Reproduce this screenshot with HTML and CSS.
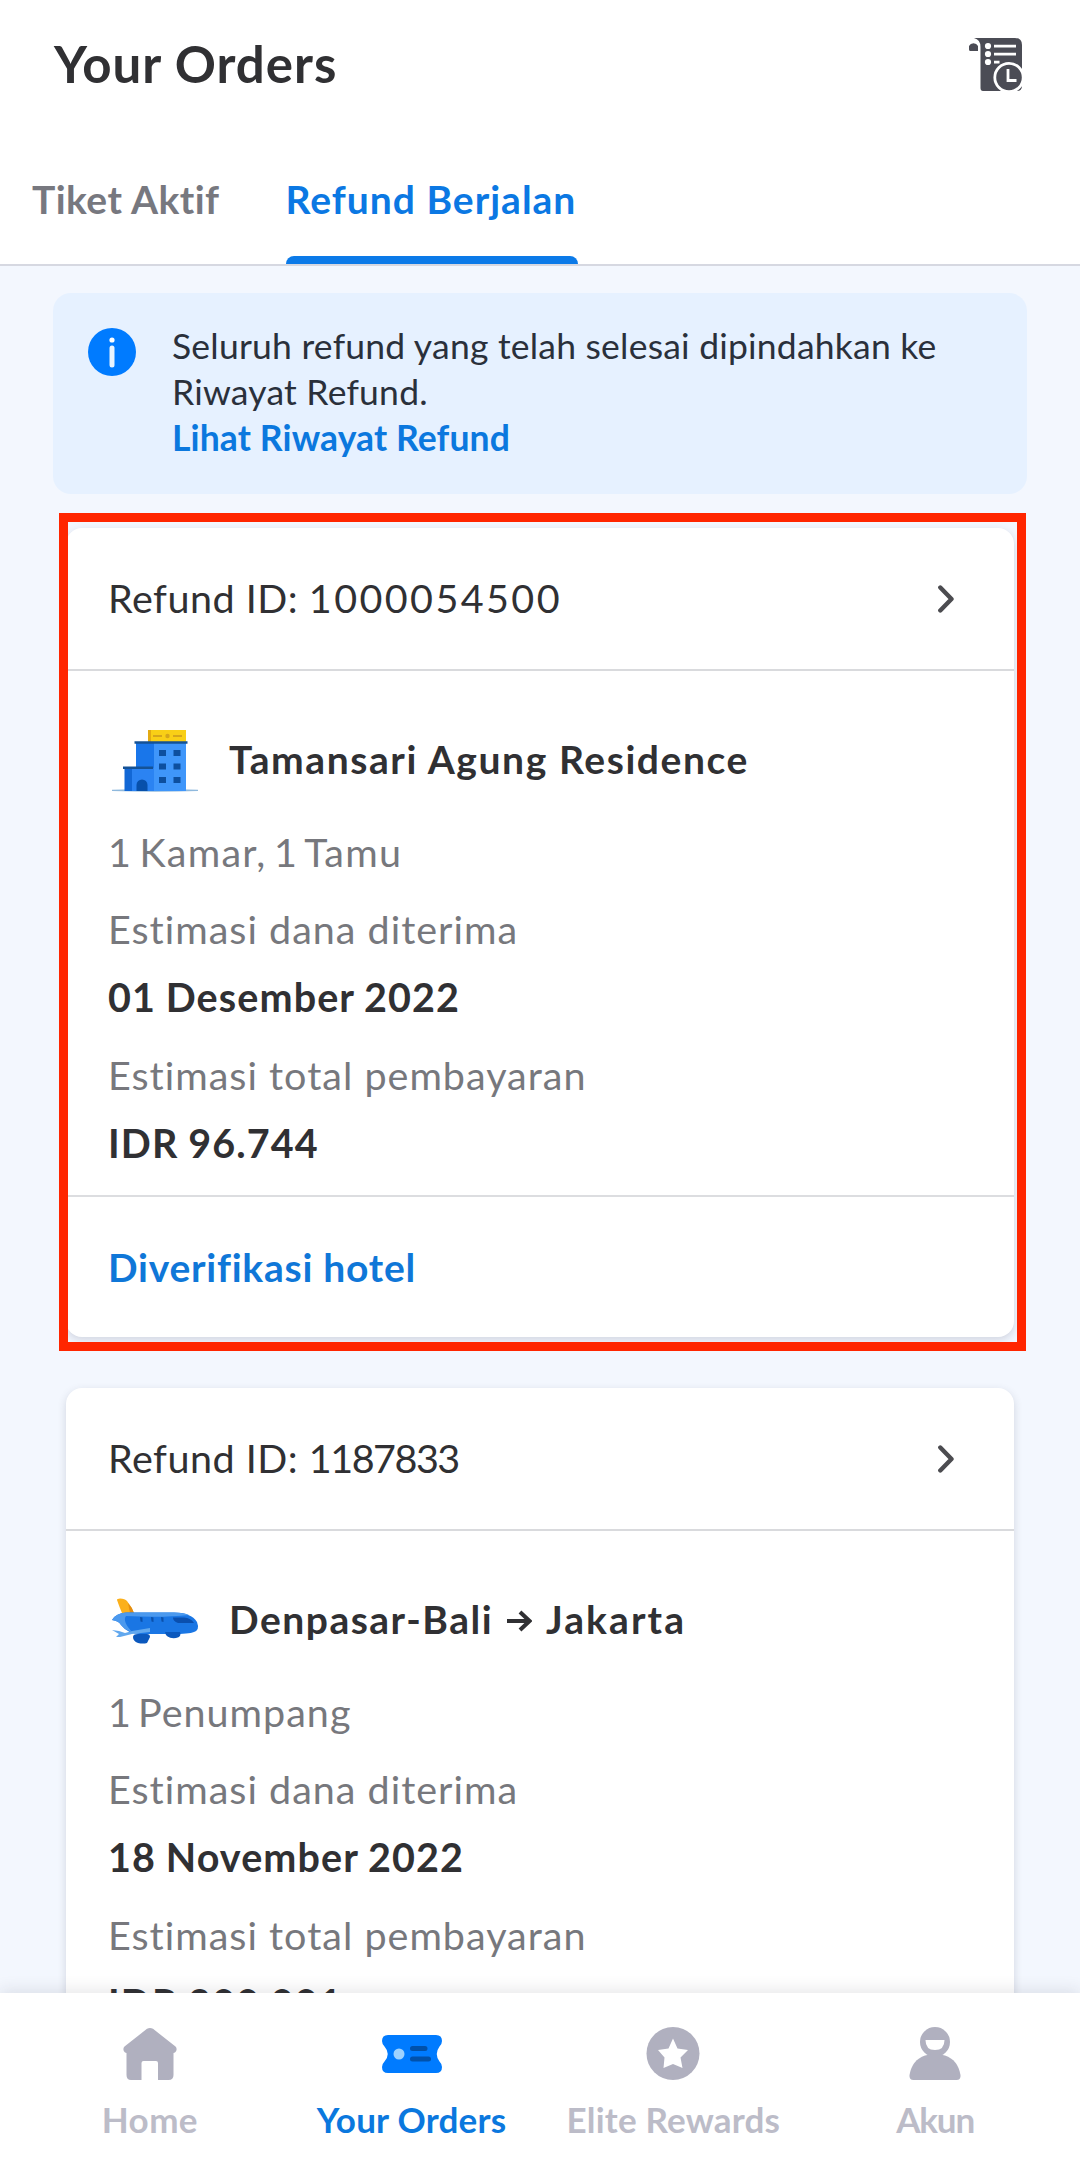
FILE: index.html
```html
<!DOCTYPE html>
<html lang="id">
<head>
<meta charset="utf-8">
<title>Your Orders</title>
<link rel="stylesheet" href="styles.css">
</head>
<body>
<div class="app">
  <header class="top">
    <div class="top-bar">
      <h1 class="top-title">Your Orders</h1>
      <svg class="history-icon" viewBox="0 0 54 54" width="54" height="54">
        <path fill="#4b4c55" d="M0 8a5 5 0 0 1 9 0v5H1.500Q0 13 0 11.500zM5 0H46Q53 0 53 7V48Q53 53 48 53H14Q11.500 53 11.500 50V9Q11.500 1.500 5 0z"/>
        <g fill="#fff">
          <circle cx="19" cy="8" r="3.100"/><circle cx="19" cy="16" r="3.100"/><circle cx="19" cy="24" r="3.100"/>
          <path d="M25 6.700h22v2.800H25zM25 14.700h22v2.800H25zM25 22.700h5.500v2.800H25z"/>
        </g>
        <circle cx="40" cy="39.500" r="14.200" fill="#4b4c55" stroke="#fff" stroke-width="2.800"/>
        <path d="M39 31v11.500h8.500" fill="none" stroke="#fff" stroke-width="2.800"/>
      </svg>
    </div>
    <nav class="tabs">
      <a class="tab tab-active-tickets">Tiket Aktif</a>
      <a class="tab tab-refunds is-selected">Refund Berjalan</a>
    </nav>
  </header>

  <main class="content">
    <section class="notice">
      <svg class="notice-icon" viewBox="0 0 48 48" width="48" height="48">
        <circle cx="24" cy="24" r="24" fill="#007bff"/>
        <circle cx="24" cy="12" r="2.600" fill="#fff"/>
        <path d="M24 20v17" stroke="#e8f4ff" stroke-width="5" stroke-linecap="round"/>
      </svg>
      <div class="notice-text">
        <p>Seluruh refund yang telah selesai dipindahkan ke<br>Riwayat Refund.</p>
        <a class="notice-link">Lihat Riwayat Refund</a>
      </div>
    </section>

    <article class="card is-marked">
      <div class="card-head">
        <span class="refund-id">Refund ID: <span class="digits-wide">1000054500</span></span>
        <svg class="chevron" viewBox="0 0 16 28" width="16" height="28"><path d="M2.300 2.500L13.500 14L2.300 25.500" fill="none" stroke="#4c4c50" stroke-width="4.400" stroke-linecap="round" stroke-linejoin="round"/></svg>
      </div>
      <div class="card-body">
        <div class="product">
          <svg class="product-icon" viewBox="0 0 88 62" width="88" height="62">
            <path d="M0 59.800Q44 58 86 59.800V61Q44 62.500 0 61z" fill="#8fb9dd"/>
            <path d="M36 0H74V12H36z" fill="#f9cf16"/><path d="M36 0h3v12h-3z" fill="#e3aa13"/>
            <path d="M41 6h9M61 6h9" stroke="#d5a51b" stroke-width="1.800"/><circle cx="55.500" cy="6" r="2.200" fill="#d5a51b"/>
            <path d="M24 13H43V61H24z" fill="#1976ea"/><path d="M42 13H74V61H42z" fill="#3f96fa"/>
            <path d="M22.500 11.200H75.500V13.800H22.500z" fill="#145296"/>
            <path d="M12.500 38H21V61H12.500z" fill="#1267d5"/><path d="M20 38H42V61H20z" fill="#2b83f2"/>
            <path d="M11 36.500H41V39H11z" fill="#145296"/>
            <path d="M24.500 61V55a5.500 5.500 0 0 1 11 0v6z" fill="#0750aa"/>
            <path d="M47 20h7v6h-7zM61.500 20h7v6h-7zM47 33.500h7v6h-7zM61.500 33.500h7v6h-7zM47 47h7v6h-7zM61.500 47h7v6h-7z" fill="#0d4f9f"/>
          </svg>
          <h2 class="product-name name-hotel">Tamansari Agung Residence</h2>
        </div>
        <p class="detail detail-rooms">1 Kamar, 1 Tamu</p>
        <dl class="facts">
          <dt>Estimasi dana diterima</dt><dd>01 Desember 2022</dd>
          <dt>Estimasi total pembayaran</dt><dd>IDR 96.744</dd>
        </dl>
      </div>
      <div class="card-foot">Diverifikasi hotel</div>
    </article>

    <article class="card">
      <div class="card-head">
        <span class="refund-id">Refund ID: <span class="digits-tight">1187833</span></span>
        <svg class="chevron" viewBox="0 0 16 28" width="16" height="28"><path d="M2.300 2.500L13.500 14L2.300 25.500" fill="none" stroke="#4c4c50" stroke-width="4.400" stroke-linecap="round" stroke-linejoin="round"/></svg>
      </div>
      <div class="card-body">
        <div class="product">
          <svg class="product-icon" viewBox="0 0 88 46" width="88" height="46">
            <path d="M5 2Q5 .500 8 .500Q13 .500 15 3Q19 8 22 15H10Q7 8 5 2z" fill="#fbb01c"/>
            <path d="M16 5Q20 9 22 15h-4z" fill="#e48d10"/>
            <path d="M0 22Q4 15 14 14.500H62Q79 14.500 85 24Q88 32 82 34Q77 36 60 36H28Q16 36 9 27Q7 23 0 22z" fill="#1a76e4"/>
            <path d="M0 22Q4 15 14 14.500H62Q72 14.500 77 17Q50 20 14 18Q10 23 20 34Q13 32 9 27Q7 23 0 22z" fill="#4b99ee"/>
            <path d="M61 19.500H72Q79 20 82 25H66Q61 23 61 19.500z" fill="#0a4fae"/>
            <path d="M28 19l2.500.500v4.500l-2-.500zM39 19l2.500.500v4.500l-2-.500zM49 19l2.500.500v4.500l-2-.500z" fill="#0b50aa"/>
            <path d="M21 39q0-3 5-3h9q3 0 3 3l-3 6q-4 1-9 0-5-2-5-6zM53 34h15q2 5-4 6-10 1-11-6z" fill="#0b58bd"/>
            <path d="M0 32l7 1 6 2 7-2 18-3v4l-18 2-12 3H4l3-3z" fill="#62a8ee"/>
          </svg>
          <h2 class="product-name name-flight">
            <span class="origin">Denpasar-Bali</span>
            <svg class="arrow" viewBox="0 0 26 24" width="26" height="24"><path d="M1 12H23M14 3L23.500 12L14 21" fill="none" stroke="#303033" stroke-width="4"/></svg>
            <span class="destination">Jakarta</span>
          </h2>
        </div>
        <p class="detail">1 Penumpang</p>
        <dl class="facts">
          <dt>Estimasi dana diterima</dt><dd>18 November 2022</dd>
          <dt>Estimasi total pembayaran</dt><dd>IDR 900.001</dd>
        </dl>
      </div>
    </article>
  </main>

  <nav class="bottom-nav">
    <a class="nav-item">
      <svg class="nav-icon" viewBox="0 0 54 54" width="54" height="54"><path fill="#b0b0bf" d="M24 2.800Q27 1 30 2.800L52.500 20.500Q55 23.500 52 26.500L50.500 27V49Q50.500 54 45.500 54H35V37Q35 35 33 35H20.500Q18.500 35 18.500 37V54H8Q3.500 54 3.500 49V27L2 26.500Q-1 23.500 1.500 20.500z"/></svg>
      <span class="nav-label label-home">Home</span>
    </a>
    <a class="nav-item is-current">
      <svg class="nav-icon" viewBox="0 0 60 54" width="60" height="54">
        <path fill="#007bff" d="M6 9H54Q60 9 60 15Q60 18 57.500 20.500Q52 28 57.500 35.500Q60 38 60 41Q60 47 54 47H6Q0 47 0 41Q0 38 2.500 35.500Q9 28 2.500 20.500Q0 18 0 15Q0 9 6 9z"/>
        <circle cx="17" cy="28" r="5.500" fill="#9ed2ff"/>
        <path d="M30.500 22.500h12.500M30.500 33h16" stroke="#0051ab" stroke-width="5" stroke-linecap="round"/>
      </svg>
      <span class="nav-label label-orders">Your Orders</span>
    </a>
    <a class="nav-item">
      <svg class="nav-icon" viewBox="0 0 54 54" width="54" height="54"><circle cx="27" cy="27.500" r="26.500" fill="#b0b0bf"/><path fill="#fff" d="M27 12.500L31.500 22.500L42 24L34.500 31.500L36.500 42L27 38L17.500 42L18.500 31.500L12 24L22.500 22.500z"/></svg>
      <span class="nav-label label-rewards">Elite Rewards</span>
    </a>
    <a class="nav-item">
      <svg class="nav-icon" viewBox="0 0 54 54" width="54" height="54"><circle cx="27" cy="16" r="15" fill="#b0b0bf"/><path fill="#b0b0bf" d="M17 29.500Q22 28 27 28Q32 28 37 29.500Q50 34 52.500 49Q53 54 48.500 54H5.500Q1 54 1.500 49Q4 34 17 29.500z"/><path d="M17.500 14H36.500Q36.500 24 27 24Q17.500 24 17.500 14z" fill="#fff"/></svg>
      <span class="nav-label label-account">Akun</span>
    </a>
  </nav>
</div>
</body>
</html>
```
FILE: styles.css
```css
* { box-sizing: border-box; }

body {
  margin: 0;
  font-family: Lato, "Open Sans", sans-serif;
  color: #303033;
}

h1, h2, p, dl, dd { margin: 0; }
svg { display: block; flex: none; }

.app {
  display: flex;
  flex-direction: column;
  width: 1080px;
  height: 2171px;
  overflow: hidden;
  background: #f3f7fe;
}

/* Header and tabs */
.top {
  flex: none;
  height: 266px;
  background: #fff;
  border-bottom: 2px solid #d6d8e1;
}

.top-bar {
  display: flex;
  justify-content: space-between;
  align-items: flex-start;
  height: 92px;
  padding: 34px 57px 0 54px;
}

.top-title {
  font-size: 51px;
  line-height: 60px;
  font-weight: 700;
  letter-spacing: 1px;
}

.history-icon { margin-top: 4px; }

.tabs {
  display: flex;
  gap: 66px;
  height: 172px;
  padding-left: 32px;
}

.tab {
  height: 172px;
  padding-top: 83px;
  font-size: 39px;
  line-height: 48px;
  font-weight: 700;
  letter-spacing: 0.45px;
  color: #77787f;
}

.tab-refunds {
  width: 292px;
  letter-spacing: 1px;
  white-space: nowrap;
}

.is-selected {
  position: relative;
  color: #0b78e3;
}

.is-selected::after {
  content: "";
  position: absolute;
  left: 0;
  right: 0;
  bottom: 0;
  height: 8px;
  border-radius: 8px 8px 0 0;
  background: #0b7ae8;
}

/* Scrolling content */
.content {
  flex: 1;
  min-height: 0;
  overflow: hidden;
  padding-top: 27px;
}

.notice {
  display: flex;
  gap: 36px;
  height: 201px;
  margin: 0 53px 34px;
  padding: 30px 35px;
  border-radius: 18px;
  background: #e6f1ff;
}

.notice-icon { margin-top: 5px; }

.notice-text {
  font-size: 35.5px;
  line-height: 46px;
  letter-spacing: 0.22px;
  color: #2a303b;
  white-space: nowrap;
}

.notice-link {
  font-weight: 700;
  letter-spacing: 0.12px;
  color: #0b78de;
}

/* Refund cards */
.card {
  position: relative;
  margin: 0 66px 51px;
  border-radius: 16px;
  background: #fff;
  box-shadow: 0 3px 8px rgba(40, 50, 80, 0.17);
}

.is-marked::after {
  content: "";
  position: absolute;
  inset: -15px -12px -14px -7px;
  border: 9px solid #ff2600;
}

.card-head {
  display: flex;
  align-items: center;
  justify-content: space-between;
  height: 143px;
  padding: 0 60px 0 42px;
  border-bottom: 2px solid #d9dadd;
}

.refund-id {
  margin-bottom: 3px;
  font-size: 39.5px;
  letter-spacing: 0.5px;
}

.digits-wide { letter-spacing: 2.4px; }
.digits-tight { letter-spacing: -1.5px; }

.card-body { padding: 56px 42px 28px; }

.product {
  display: flex;
  align-items: center;
  height: 64px;
  margin-bottom: 37px;
}

.product-icon { margin: 3px 0 0 4px; }

.product-name {
  margin-left: 29px;
  font-size: 39px;
  line-height: 64px;
  font-weight: 700;
}

.name-hotel { letter-spacing: 1.58px; }

.name-flight {
  display: flex;
  align-items: center;
}

.origin { letter-spacing: 1.5px; }
.arrow { margin: 3px 14px 0 13px; }
.destination { letter-spacing: 2.1px; }

.detail {
  margin-bottom: 29px;
  font-size: 39.5px;
  line-height: 48px;
  letter-spacing: 1px;
  word-spacing: -5px;
  color: #77787d;
}

.detail-rooms {
  letter-spacing: 1.25px;
  word-spacing: -4px;
}

.facts {
  font-size: 39.5px;
  line-height: 48px;
  letter-spacing: 1px;
}

.facts dt {
  margin-bottom: 20px;
  color: #77787d;
}

.facts dd {
  font-weight: 700;
  letter-spacing: 1.1px;
  word-spacing: -1px;
}

.facts dd + dt { margin-top: 30px; }

.card-foot {
  height: 142px;
  padding: 46px 42px 0;
  border-top: 2px solid #dcdde0;
  font-size: 39px;
  line-height: 48px;
  font-weight: 700;
  letter-spacing: 0.75px;
  color: #0f77d8;
}

/* Bottom navigation */
.bottom-nav {
  position: relative;
  flex: none;
  display: grid;
  grid-template-columns: repeat(4, 1fr);
  height: 178px;
  padding: 33px 14px 0 19px;
  background: #fff;
  box-shadow: 0 -2px 16px rgba(30, 35, 50, 0.12);
}

.nav-item {
  display: flex;
  flex-direction: column;
  align-items: center;
  gap: 19px;
  color: #bcbcc8;
}

.nav-item.is-current { color: #0b78de; }

.nav-label {
  font-size: 35px;
  line-height: 40px;
  font-weight: 700;
}

.label-home { letter-spacing: 0.4px; }
.label-orders { letter-spacing: 0.25px; }
.label-rewards { letter-spacing: 0.2px; }
.label-account { letter-spacing: -1.2px; }
```
